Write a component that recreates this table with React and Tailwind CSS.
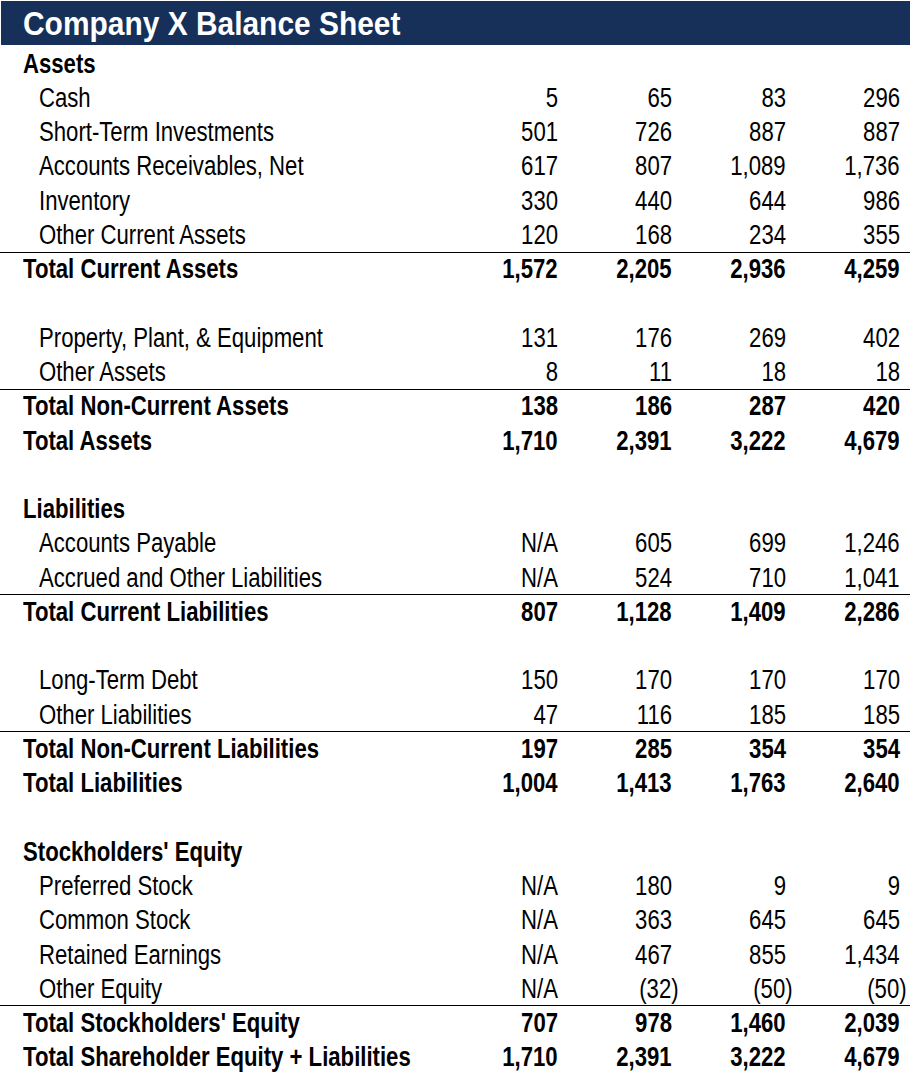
const rows = [
  { t: 'head', label: 'Assets' },
  { t: 'item', label: 'Cash', v: ['5', '65', '83', '296'] },
  { t: 'item', label: 'Short-Term Investments', v: ['501', '726', '887', '887'] },
  { t: 'item', label: 'Accounts Receivables, Net', v: ['617', '807', '1,089', '1,736'] },
  { t: 'item', label: 'Inventory', v: ['330', '440', '644', '986'] },
  { t: 'item', label: 'Other Current Assets', v: ['120', '168', '234', '355'] },
  { t: 'total', line: true, label: 'Total Current Assets', v: ['1,572', '2,205', '2,936', '4,259'] },
  { t: 'blank' },
  { t: 'item', label: 'Property, Plant, & Equipment', v: ['131', '176', '269', '402'] },
  { t: 'item', label: 'Other Assets', v: ['8', '11', '18', '18'] },
  { t: 'total', line: true, label: 'Total Non-Current Assets', v: ['138', '186', '287', '420'] },
  { t: 'total', label: 'Total Assets', v: ['1,710', '2,391', '3,222', '4,679'] },
  { t: 'blank' },
  { t: 'head', label: 'Liabilities' },
  { t: 'item', label: 'Accounts Payable', v: ['N/A', '605', '699', '1,246'] },
  { t: 'item', label: 'Accrued and Other Liabilities', v: ['N/A', '524', '710', '1,041'] },
  { t: 'total', line: true, label: 'Total Current Liabilities', v: ['807', '1,128', '1,409', '2,286'] },
  { t: 'blank' },
  { t: 'item', label: 'Long-Term Debt', v: ['150', '170', '170', '170'] },
  { t: 'item', label: 'Other Liabilities', v: ['47', '116', '185', '185'] },
  { t: 'total', line: true, label: 'Total Non-Current Liabilities', v: ['197', '285', '354', '354'] },
  { t: 'total', label: 'Total Liabilities', v: ['1,004', '1,413', '1,763', '2,640'] },
  { t: 'blank' },
  { t: 'head', label: "Stockholders' Equity" },
  { t: 'item', label: 'Preferred Stock', v: ['N/A', '180', '9', '9'] },
  { t: 'item', label: 'Common Stock', v: ['N/A', '363', '645', '645'] },
  { t: 'item', label: 'Retained Earnings', v: ['N/A', '467', '855', '1,434'] },
  { t: 'item', label: 'Other Equity', v: ['N/A', '(32)', '(50)', '(50)'] },
  { t: 'total', line: true, label: "Total Stockholders' Equity", v: ['707', '978', '1,460', '2,039'] },
  { t: 'total', label: 'Total Shareholder Equity + Liabilities', v: ['1,710', '2,391', '3,222', '4,679'] },
];

// no narrow face installed: squeeze Liberation Sans to Arial Narrow's width
function Num({ v }) {
  if (v.startsWith('(')) {
    // closing paren hangs past the column edge, like Excel's accounting format
    return (
      <span className="inline-block scale-x-[0.82] origin-right">
        {v.slice(0, -1)}
        <span className="-mr-[8px]">)</span>
      </span>
    );
  }
  return <span className="inline-block scale-x-[0.82] origin-right">{v}</span>;
}

function Row({ r }) {
  if (r.t === 'blank') return <div className="h-[34.27px]" />;
  const bold = r.t !== 'item';
  return (
    <div
      className={`relative grid grid-cols-[444px_114px_114px_114px_114px] h-[34.27px] items-center ${
        bold ? 'font-bold' : ''
      }`}
    >
      {r.line && <div className="absolute left-0 right-0 -top-[1px] h-px bg-black" />}
      <div className={`whitespace-nowrap ${r.t === 'item' ? 'pl-[39px]' : 'pl-[23px]'}`}>
        <span className="inline-block scale-x-[0.82] origin-left">{r.label}</span>
      </div>
      {(r.v || []).map((v, i) => (
        <div key={i} className="text-right whitespace-nowrap">
          <Num v={v} />
        </div>
      ))}
    </div>
  );
}

export default function App() {
  return (
    <div
      className="w-[913px] h-[1075px] bg-white text-black text-[27px] leading-none overflow-hidden"
      style={{ fontFamily: '"Liberation Sans", Arial, sans-serif' }}
    >
      <div className="pt-px pl-px w-[910px]">
        <div className="h-[44px] bg-[#16305a] flex items-center pl-[22px]">
          <h1 className="text-white font-bold text-[34px] leading-none whitespace-nowrap">
            <span className="inline-block scale-x-[0.88] origin-left">Company X Balance Sheet</span>
          </h1>
        </div>
      </div>
      <div className="pt-[2px] w-[910px]">
        {rows.map((r, i) => (
          <Row key={i} r={r} />
        ))}
      </div>
    </div>
  );
}
